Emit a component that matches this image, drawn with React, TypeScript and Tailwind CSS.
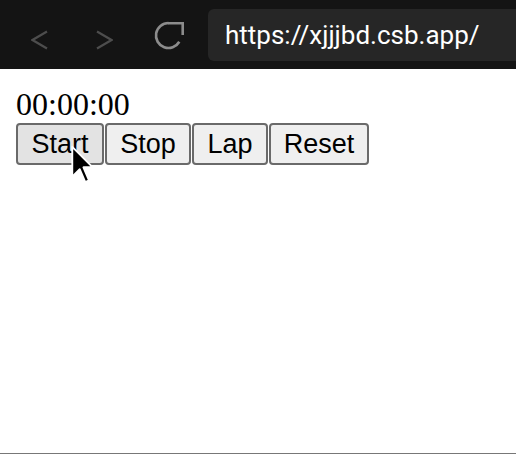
import React from "react";

const buttons = [
  { label: "Start", w: "w-[88px]", bg: "bg-[#e3e3e3]" },
  { label: "Stop", w: "w-[86px]", bg: "bg-[#efefef]" },
  { label: "Lap", w: "w-[76px]", bg: "bg-[#efefef]" },
  { label: "Reset", w: "w-[100px]", bg: "bg-[#efefef]" },
];

function BrowserBar() {
  return (
    <div className="flex h-[69px] shrink-0 items-start bg-[#141414]">
      {/* back */}
      <svg className="ml-[31px] mt-[30px]" width="17" height="20" viewBox="0 0 17 20" fill="none">
        <path d="M16 1.5 L1.5 10 L16 18.5" stroke="#4d4d4d" strokeWidth="2.2" />
      </svg>
      {/* forward */}
      <svg className="ml-[48px] mt-[30px]" width="17" height="20" viewBox="0 0 17 20" fill="none">
        <path d="M1 1.5 L15.5 10 L1 18.5" stroke="#4d4d4d" strokeWidth="2.2" />
      </svg>
      {/* reload */}
      <svg className="ml-[41px] mt-[20px]" width="32" height="32" viewBox="0 0 32 32" fill="none">
        <path d="M25.3 21.75 A12.5 12.5 0 1 1 14.5 3" stroke="#8c8c8c" strokeWidth="2.6" />
        <path d="M14 3.3 H28.7 V15" stroke="#8c8c8c" strokeWidth="2.6" />
      </svg>
      <div className="ml-[22px] mt-[9px] flex h-[52px] flex-1 items-center rounded-l-[6px] bg-[#262626] pl-[17px]">
        <span className="font-['Roboto',sans-serif] text-[26px] text-white">https://xjjjbd.csb.app/</span>
      </div>
    </div>
  );
}

export default function App() {
  return (
    <div className="relative flex h-[454px] flex-col overflow-hidden bg-white">
      <BrowserBar />
      <div className="flex-1 border-b border-[#777777] bg-white px-[16px] pt-[16px]">
        <div className="font-['Liberation_Serif',serif] text-[32px] leading-[38px] text-black">00:00:00</div>
        <div className="flex gap-[1px]">
          {buttons.map((b) => (
            <button
              key={b.label}
              className={`${b.w} ${b.bg} flex h-[42px] items-center justify-center rounded-[4px] border-2 border-[#6a6a6a] font-['Liberation_Sans',sans-serif] text-[27px] text-black`}
            >
              {b.label}
            </button>
          ))}
        </div>
      </div>
      {/* mouse pointer */}
      <svg
        className="pointer-events-none absolute left-[70px] top-[145px]"
        width="25"
        height="39"
        viewBox="-1 -1 13 21"
      >
        <path d="M0 0 L0 16 L4 12 L7 19 L9 18 L6 11 L11 11 Z" fill="#000" stroke="#fff" strokeWidth="1" strokeLinejoin="round" />
      </svg>
    </div>
  );
}
